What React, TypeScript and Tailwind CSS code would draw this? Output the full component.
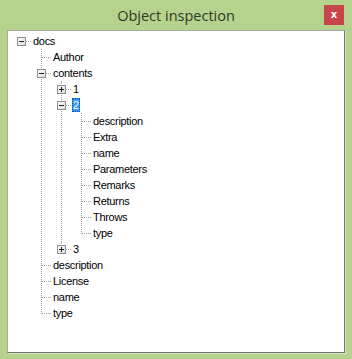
import React from "react";

type Node = { label: string; children?: Node[]; expanded?: boolean; selected?: boolean; collapsedKids?: boolean };

const leaf = (l: string): Node => ({ label: l });

const tree: Node = {
  label: "docs",
  expanded: true,
  children: [
    leaf("Author"),
    {
      label: "contents",
      expanded: true,
      children: [
        { label: "1", collapsedKids: true },
        {
          label: "2",
          expanded: true,
          selected: true,
          children: ["description", "Extra", "name", "Parameters", "Remarks", "Returns", "Throws", "type"].map(leaf),
        },
        { label: "3", collapsedKids: true },
      ],
    },
    leaf("description"),
    leaf("License"),
    leaf("name"),
    leaf("type"),
  ],
};

type Row = {
  label: string;
  depth: number;
  isLast: boolean;
  cont: boolean[];
  box: "plus" | "minus" | null;
  selected?: boolean;
};

function flatten(n: Node, depth: number, isLast: boolean, cont: boolean[], out: Row[]) {
  const hasKids = !!(n.children && n.children.length) || !!n.collapsedKids;
  out.push({
    label: n.label,
    depth,
    isLast,
    cont,
    box: hasKids ? (n.expanded ? "minus" : "plus") : null,
    selected: n.selected,
  });
  if (n.expanded && n.children) {
    n.children.forEach((c, i) => {
      const last = i === n.children!.length - 1;
      flatten(c, depth + 1, last, [...cont, !isLast], out);
    });
  }
}

const rows: Row[] = [];
flatten(tree, 0, true, [], rows);

const LINE = "#a0a0a0";

function Cell({ kind, row }: { kind: "cont" | "empty" | "own"; row?: Row }) {
  return (
    <svg width="20" height="16" viewBox="0 0 20 16" className="block shrink-0" shapeRendering="crispEdges">
      {kind === "cont" && (
        <line x1="10.5" y1="0" x2="10.5" y2="16" stroke={LINE} strokeDasharray="1 1" />
      )}
      {kind === "own" && row && (
        <>
          {row.depth >= 1 && (
            <line x1="10.5" y1="0" x2="10.5" y2={row.isLast ? 9 : 16} stroke={LINE} strokeDasharray="1 1" />
          )}
          <line x1={row.box ? 15 : 11} y1="8.5" x2="20" y2="8.5" stroke={LINE} strokeDasharray="1 1" />
          {row.box && (
            <>
              <defs>
                <linearGradient id="bx" x1="0" y1="0" x2="1" y2="1">
                  <stop offset="0" stopColor="#ffffff" />
                  <stop offset="1" stopColor="#dcdcdc" />
                </linearGradient>
              </defs>
              <rect x="6.5" y="4.5" width="8" height="8" fill="url(#bx)" stroke="#8e8f8f" />
              <line x1="8" y1="8.5" x2="13" y2="8.5" stroke="#1f1f1f" />
              {row.box === "plus" && <line x1="10.5" y1="6" x2="10.5" y2="11" stroke="#1f1f1f" />}
            </>
          )}
        </>
      )}
    </svg>
  );
}

function TreeRow({ row }: { row: Row }) {
  const cells: React.ReactNode[] = [];
  for (let k = 0; k < row.depth; k++) {
    const ancestorContinues = k >= 1 && !!row.cont[k];
    cells.push(<Cell key={k} kind={ancestorContinues ? "cont" : "empty"} />);
  }
  cells.push(<Cell key="own" kind="own" row={row} />);
  return (
    <div className="flex h-[16px] items-center">
      {cells}
      <span
        className={
          "ml-[1px] px-[1px] leading-[14px] whitespace-nowrap " +
          (row.selected ? "bg-[#3399ff] text-white outline-1 outline-dotted outline-[#1e4f8a] -outline-offset-1" : "text-black")
        }
      >
        {row.label}
      </span>
    </div>
  );
}

export default function App() {
  return (
    <div className="w-[352px] h-[359px] bg-[#b6d38e] flex flex-col overflow-hidden">
      <div className="h-[30px] grid grid-cols-[1fr_auto_1fr] items-start shrink-0">
        <div />
        <div
          className="pt-[5px] text-[14.5px] leading-[22px] text-[#2f3a24]"
          style={{ fontFamily: '"Open Sans", "Noto Sans", sans-serif' }}
        >
          Object inspection
        </div>
        <div className="flex justify-end pr-[8px] pt-[5px]">
          <div className="w-[20px] h-[20px] bg-[#c8464b] flex items-center justify-center text-white text-[10px] font-bold leading-none" style={{ fontFamily: '"DejaVu Sans", sans-serif' }}>
            x
          </div>
        </div>
      </div>
      <div className="mx-[7px] mb-[6px] flex-1 bg-white border border-t-[#a9a9a9] border-l-[#a9a9a9] border-r-[#707070] border-b-[#707070] shadow-[1px_1px_0_#d8e8c2]">
        <div
          className="pt-[2px] pl-[3px] text-[11px] tracking-[-0.3px]"
          style={{ fontFamily: '"Liberation Sans", Arial, sans-serif' }}
        >
          {rows.map((r, i) => (
            <TreeRow key={i} row={r} />
          ))}
        </div>
      </div>
    </div>
  );
}
